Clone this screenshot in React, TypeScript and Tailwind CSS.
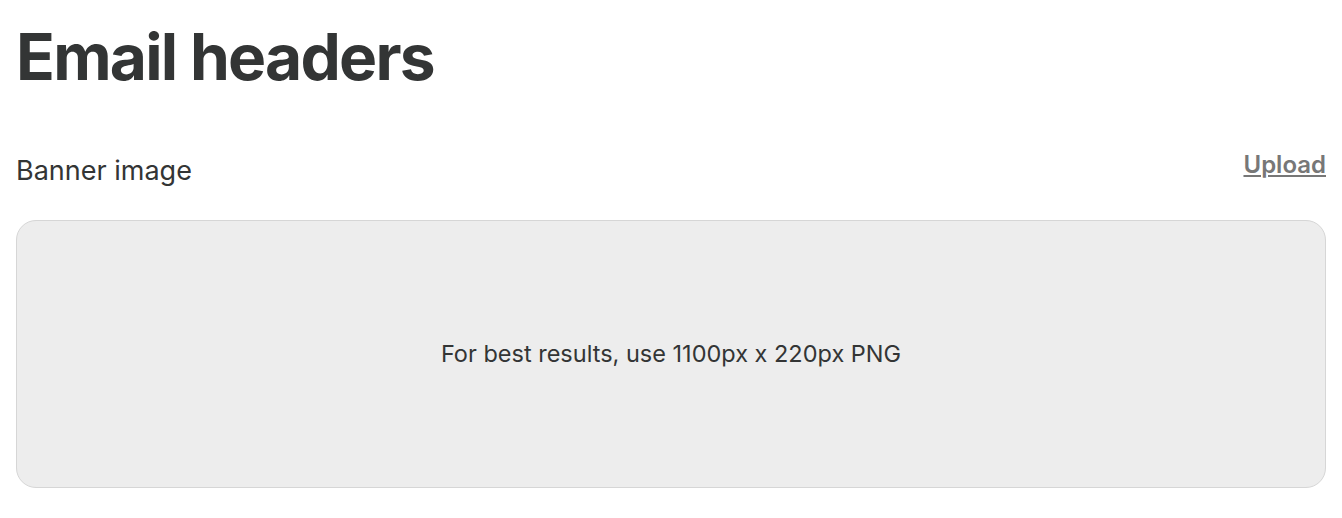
export default function App() {
  return (
    <div className="min-h-screen bg-white px-4 pt-[19px] text-[#333535] font-['Inter',sans-serif]">
      <h1 className="text-[64px] font-bold leading-[1.2] tracking-[-0.027em]">Email headers</h1>

      <div className="mt-[57px] flex h-9 items-start justify-between">
        <span className="text-[27px] leading-9">Banner image</span>
        <button className="text-2xl leading-6 font-semibold text-[#777777] underline decoration-2 underline-offset-2">
          Upload
        </button>
      </div>

      <div className="mt-[31px] flex h-[268px] items-center justify-center rounded-[20px] border border-[#d6d6d6] bg-[#ededed]">
        <span className="text-[23.5px]">For best results, use 1100px x 220px PNG</span>
      </div>
    </div>
  );
}
